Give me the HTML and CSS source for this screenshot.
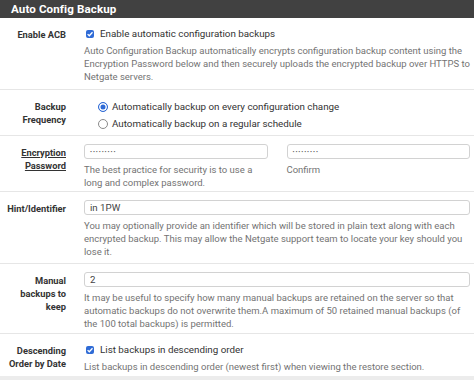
FILE: index.html
```html
<!DOCTYPE html>
<html>
<head>
<meta charset="utf-8">
<link rel="stylesheet" href="styles.css">
</head>
<body>
<div class="panel">
  <div class="panel-heading">Auto Config Backup</div>

  <div class="row row-acb">
    <div class="label">Enable ACB</div>
    <div class="content">
      <div class="check-line"><span class="checkbox"><svg viewBox="0 0 8 8" width="8" height="8"><path d="M1.6 4.1 L3.3 5.8 L6.5 2.3" fill="none" stroke="#fff" stroke-width="1.3"/></svg></span>Enable automatic configuration backups</div>
      <div class="help help-check">Auto Configuration Backup automatically encrypts configuration backup content using the Encryption Password below and then securely uploads the encrypted backup over HTTPS to Netgate servers.</div>
    </div>
  </div>

  <div class="row row-freq">
    <div class="label">Backup<br>Frequency</div>
    <div class="content">
      <div class="radio-line"><span class="radio checked"></span>Automatically backup on every configuration change</div>
      <div class="radio-line"><span class="radio"></span>Automatically backup on a regular schedule</div>
    </div>
  </div>

  <div class="row row-pass">
    <div class="label"><span class="link">Encryption<br>Password</span></div>
    <div class="content pair">
      <div class="col">
        <div class="input dots">•••••••••</div>
        <div class="help help-input">The best practice for security is to use a long and complex password.</div>
      </div>
      <div class="col">
        <div class="input dots">•••••••••</div>
        <div class="help help-input">Confirm</div>
      </div>
    </div>
  </div>

  <div class="row row-hint">
    <div class="label">Hint/Identifier</div>
    <div class="content">
      <div class="input">in 1PW</div>
      <div class="help help-input">You may optionally provide an identifier which will be stored in plain text along with each encrypted backup. This may allow the Netgate support team to locate your key should you lose it.</div>
    </div>
  </div>

  <div class="row row-manual">
    <div class="label">Manual<br>backups to<br>keep</div>
    <div class="content">
      <div class="input">2</div>
      <div class="help help-input">It may be useful to specify how many manual backups are retained on the server so that automatic backups do not overwrite them.A maximum of 50 retained manual backups (of the 100 total backups) is permitted.</div>
    </div>
  </div>

  <div class="row row-desc">
    <div class="label">Descending<br>Order by Date</div>
    <div class="content">
      <div class="check-line"><span class="checkbox"><svg viewBox="0 0 8 8" width="8" height="8"><path d="M1.6 4.1 L3.3 5.8 L6.5 2.3" fill="none" stroke="#fff" stroke-width="1.3"/></svg></span>List backups in descending order</div>
      <div class="help help-check">List backups in descending order (newest first) when viewing the restore section.</div>
    </div>
  </div>
  <div class="footer-strip"></div>
</div>
</body>
</html>
```

FILE: styles.css
```css
html, body {
  margin: 0;
  padding: 0;
  background: #ffffff;
}
body {
  font-family: Roboto, "Liberation Sans", Arial, sans-serif;
  font-size: 9.5px;
  color: #333333;
  width: 474px;
  height: 380px;
  overflow: hidden;
}
.panel {
  display: flex;
  flex-direction: column;
}
.panel-heading {
  height: 18px;
  line-height: 18px;
  background: #414141;
  color: #ffffff;
  font-weight: 700;
  font-size: 11.6px;
  padding-left: 11px;
  letter-spacing: 0.1px;
}
.row {
  display: flex;
  gap: 18px;
  padding: 8px 4px 5px 0;
  border-bottom: 1px solid #e6e6e6;
}
.row-acb { padding-bottom: 6px; }
.row-freq { padding-bottom: 3px; }
.row-pass { padding-bottom: 2px; }
.row-hint { padding-bottom: 5px; }
.row-manual { padding-bottom: 3px; }
.row-desc { border-bottom: none; padding-bottom: 3px; }
.label {
  width: 66px;
  flex: none;
  text-align: right;
  font-weight: 700;
  font-size: 9.3px;
  line-height: 13px;
  padding-top: 1.5px;
  color: #333;
}
.link {
  text-decoration: underline;
}
.content {
  flex: 1;
  min-width: 0;
}
.pair {
  display: flex;
  gap: 19px;
}
.col {
  flex: 1;
}
.check-line {
  height: 16px;
  line-height: 16px;
  display: flex;
  align-items: center;
  padding-left: 2px;
  font-size: 9.8px;
}
.checkbox {
  width: 8px;
  height: 8px;
  border-radius: 2px;
  background: #2f6bd6;
  margin-right: 6px;
  display: flex;
}
.radio-line {
  height: 17px;
  display: flex;
  align-items: center;
  padding-left: 14px;
  font-size: 9.8px;
}
.radio {
  width: 8px;
  height: 8px;
  border-radius: 50%;
  border: 1px solid #8a8a8a;
  background: #fff;
  margin-right: 4px;
  box-sizing: content-box;
}
.radio.checked {
  border-color: #2f6bd6;
  background: #2f6bd6;
  box-shadow: inset 0 0 0 1.5px #ffffff;
}
.input {
  height: 15px;
  line-height: 13px;
  border: 1px solid #d2d2d2;
  border-radius: 3px;
  box-sizing: border-box;
  padding-left: 5px;
  color: #444;
  font-size: 9.7px;
}
.input.dots {
  font-size: 6px;
  letter-spacing: 0.9px;
  line-height: 13px;
  color: #555;
}
.help {
  color: #737373;
  line-height: 13px;
}
.help-check { margin-top: 2px; }
.help-input { margin-top: 4px; }
.footer-strip {
  flex: none;
  height: 6px;
  background: #ececec;
}
```
